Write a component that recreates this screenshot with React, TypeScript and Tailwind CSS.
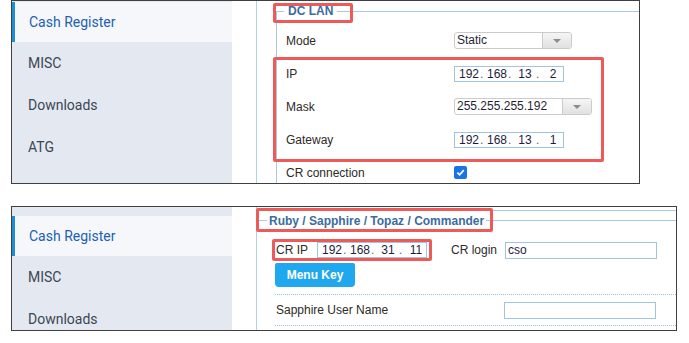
import type { ReactNode } from "react";

const sideItems = ["Cash Register", "MISC", "Downloads", "ATG"];

function Sidebar({ top, count }: { top: string; count: number }) {
  return (
    <div className={`w-[220px] flex-none bg-[#e4e9f1] ${top}`}>
      {sideItems.slice(0, count).map((item, i) =>
        i === 0 ? (
          <div
            key={item}
            className="flex h-[40px] items-center border-l-[3px] border-[#1e8fd6] bg-[#f5f7fa] pl-[14px] text-[14px] text-[#1d5fb2]"
          >
            {item}
          </div>
        ) : (
          <div key={item} className="flex h-[42px] items-center pl-[16px] text-[14px] text-[#3d4652]">
            {item}
          </div>
        )
      )}
    </div>
  );
}

function Select({ value, width }: { value: string; width: string }) {
  return (
    <div className={`flex h-[17px] ${width} overflow-hidden rounded-[3px] border border-[#cbcbcb] bg-white`}>
      <span className="flex-1 pl-[2px] text-[12px] leading-[15px] text-[#1f1f33]">{value}</span>
      <span className="flex w-[29px] items-center justify-center border-l border-[#cbcbcb] bg-gradient-to-b from-[#f5f5f5] to-[#e1e1e1]">
        <span className="h-0 w-0 border-x-[4px] border-t-[4px] border-x-transparent border-t-[#8c8c8c]" />
      </span>
    </div>
  );
}

function IpInput({ parts }: { parts: string[] }) {
  return (
    <div className="flex h-[16px] w-[110px] flex-none items-center overflow-hidden border border-[#9fc5e3] bg-white text-[12px] text-[#1e1b40]">
      {parts.map((p, i) => (
        <div key={i} className="flex">
          <span className="w-[28px] flex-none text-center">{p}</span>
          {i < 3 && <span className="w-0 -translate-x-[3px] text-[#666]">.</span>}
        </div>
      ))}
    </div>
  );
}

function Checkbox() {
  return (
    <span className="flex h-[13px] w-[13px] items-center justify-center rounded-[2px] bg-[#1a73e8]">
      <svg width="9" height="9" viewBox="0 0 10 10">
        <path d="M1.5 5.2 L4 7.6 L8.6 2.4" fill="none" stroke="white" strokeWidth="1.9" />
      </svg>
    </span>
  );
}

function Row({ label, children }: { label: string; children: ReactNode }) {
  return (
    <div className="flex h-[33px] items-center pl-[9px]">
      <span className="w-[168px] flex-none text-[12px] text-[#2e2a26]">{label}</span>
      {children}
    </div>
  );
}

function Mark({ className }: { className: string }) {
  return <div className={`pointer-events-none absolute rounded-[2px] border-[3px] border-[#ec5a5a] ${className}`} />;
}

export default function App() {
  return (
    <div
      className="relative h-[343px] w-[689px] overflow-hidden bg-white"
      style={{ fontFamily: "'Liberation Sans', Arial, sans-serif" }}
    >
      {/* DC LAN panel */}
      <div className="relative ml-[11px] flex h-[184px] w-[629px] overflow-hidden border border-[#3f3f3f]">
        <div style={{ fontFamily: "Roboto, sans-serif" }} className="flex">
          <Sidebar top="pt-[1px]" count={4} />
        </div>
        <div className="w-[24px] flex-none" />
        <div className="w-px flex-none bg-[#b5d0e5]" />
        <div className="flex-1 pl-[19px] pt-[10px]">
          <div className="border-l border-t border-[#a9c9e2]">
            <div className="-mt-[9px] ml-[7px] h-[16px] w-fit bg-white px-[4px] text-[12px] font-bold leading-[16px] text-[#3a6c9f]">
              DC LAN
            </div>
            <div className="mt-[5px]">
              <Row label="Mode">
                <Select value="Static" width="w-[118px]" />
              </Row>
              <Row label="IP">
                <IpInput parts={["192", "168", "13", "2"]} />
              </Row>
              <Row label="Mask">
                <Select value="255.255.255.192" width="w-[138px]" />
              </Row>
              <Row label="Gateway">
                <IpInput parts={["192", "168", "13", "1"]} />
              </Row>
              <Row label="CR connection">
                <Checkbox />
              </Row>
            </div>
          </div>
        </div>
        <Mark className="left-[261px] top-[2px] h-[20px] w-[80px]" />
        <Mark className="left-[261px] top-[56px] h-[105px] w-[331px]" />
      </div>

      {/* Ruby / Sapphire panel */}
      <div className="relative ml-[11px] mt-[22px] flex h-[125px] w-[666px] overflow-hidden border border-[#3f3f3f]">
        <div style={{ fontFamily: "Roboto, sans-serif" }} className="flex">
          <Sidebar top="pt-[9px]" count={3} />
        </div>
        <div className="w-[24px] flex-none" />
        <div className="w-px flex-none bg-[#b5d0e5]" />
        <div className="flex-1 pt-[3px]">
          <div className="border-t border-[#a9c9e2]" />
          <div className="mt-[1px] flex h-[17px] items-center">
            <span className="h-px w-[10px] bg-[#a9c9e2]" />
            <span className="px-[2px] text-[12px] font-bold text-[#3a6c9f]">Ruby / Sapphire / Topaz / Commander</span>
            <span className="h-px flex-1 bg-[#a9c9e2]" />
          </div>
          <div className="mt-[11px] flex h-[20px] items-center pl-[19px] text-[12px] text-[#2e2a26]">
            <span className="w-[41px] flex-none">CR IP</span>
            <IpInput parts={["192", "168", "31", "11"]} />
            <span className="ml-[24px] w-[54px] flex-none">CR login</span>
            <div className="flex h-[17px] w-[152px] items-center border border-[#9fc5e3] pl-[2px] text-[12px] text-[#1e1b40]">
              cso
            </div>
          </div>
          <button
            type="button"
            className="ml-[18px] mt-[3px] h-[24px] w-[80px] rounded-b-[4px] rounded-t-[2px] bg-[#1fa7ef] text-[12px] font-bold text-white"
          >
            Menu Key
          </button>
          <div className="ml-[18px] mt-[7px] border-t border-dotted border-[#9cc2df]" />
          <div className="ml-[18px] flex h-[30px] items-center pl-[1px] text-[12px] text-[#2e2a26]">
            <span className="w-[228px] flex-none">Sapphire User Name</span>
            <div className="h-[17px] w-[152px] border border-[#9fc5e3]" />
          </div>
          <div className="ml-[18px] border-t border-dotted border-[#9cc2df]" />
        </div>
        <Mark className="left-[244px] top-[1px] h-[24px] w-[237px]" />
        <Mark className="left-[260px] top-[32px] h-[22px] w-[160px]" />
      </div>
    </div>
  );
}
